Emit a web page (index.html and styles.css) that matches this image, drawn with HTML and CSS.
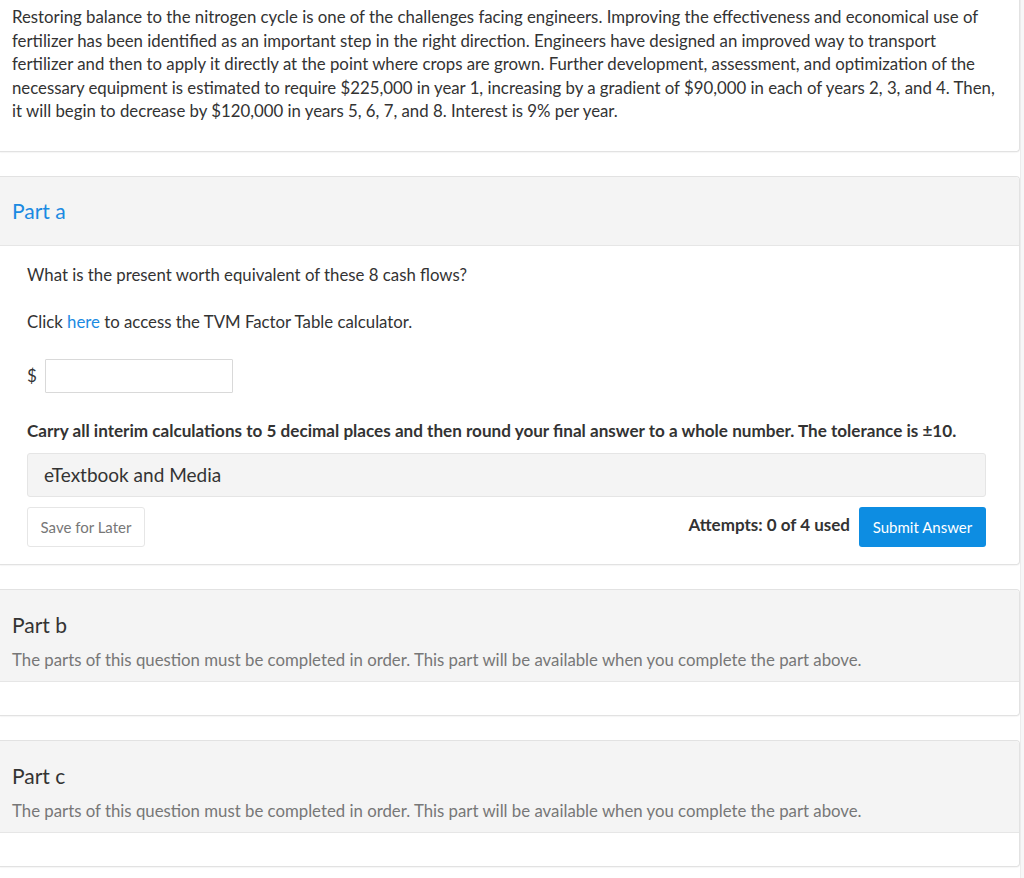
FILE: index.html
```html
<!DOCTYPE html>
<html>
<head>
<meta charset="utf-8">
<link rel="stylesheet" href="styles.css">
</head>
<body>
<div class="page">
  <main class="main">
    <section class="card intro">
      <p>Restoring balance to the nitrogen cycle is one of the challenges facing engineers. Improving the effectiveness and economical use of fertilizer has been identified as an important step in the right direction. Engineers have designed an improved way to transport fertilizer and then to apply it directly at the point where crops are grown. Further development, assessment, and optimization of the necessary equipment is estimated to require $225,000 in year 1, increasing by a gradient of $90,000 in each of years 2, 3, and 4. Then, it will begin to decrease by $120,000 in years 5, 6, 7, and 8. Interest is 9% per year.</p>
    </section>

    <section class="card part">
      <header class="part-head">
        <h2 class="part-title active">Part a</h2>
      </header>
      <div class="part-body">
        <p class="q">What is the present worth equivalent of these 8 cash flows?</p>
        <p class="q">Click <a class="link" href="#">here</a> to access the TVM Factor Table calculator.</p>
        <div class="answer-row">
          <span class="cur">$</span>
          <input class="answer" type="text">
        </div>
        <p class="note">Carry all interim calculations to 5 decimal places and then round your final answer to a whole number. The tolerance is ±10.</p>
        <div class="media">eTextbook and Media</div>
        <div class="actions">
          <button class="btn-save">Save for Later</button>
          <div class="submit-group">
            <span class="attempts">Attempts: 0 of 4 used</span>
            <button class="btn-submit">Submit Answer</button>
          </div>
        </div>
      </div>
    </section>

    <section class="card part locked">
      <header class="part-head">
        <h2 class="part-title">Part b</h2>
        <p class="locked-msg">The parts of this question must be completed in order. This part will be available when you complete the part above.</p>
      </header>
      <div class="part-foot"></div>
    </section>

    <section class="card part locked">
      <header class="part-head">
        <h2 class="part-title">Part c</h2>
        <p class="locked-msg">The parts of this question must be completed in order. This part will be available when you complete the part above.</p>
      </header>
      <div class="part-foot"></div>
    </section>
  </main>
  <div class="track"></div>
</div>
</body>
</html>
```

FILE: styles.css
```css
* { box-sizing: border-box; }
html, body { margin: 0; padding: 0; }
body {
  font-family: Lato, "Open Sans", "Liberation Sans", sans-serif;
  color: #333;
  background: #fff;
}
.page {
  display: flex;
  min-height: 878px;
}
.main {
  flex: 1;
  display: flex;
  flex-direction: column;
  gap: 24px;
  padding-bottom: 20px;
}
.track {
  width: 4px;
  border-left: 1px solid #ececec;
  background: #f7f7f7;
}
.card {
  background: #fff;
  border: 1px solid #e2e2e2;
  border-left: none;
  border-radius: 0 4px 4px 0;
  box-shadow: 0 1px 1px rgba(0,0,0,0.04);
  overflow: hidden;
}
.intro {
  border-top: none;
  border-radius: 0 0 4px 0;
  padding: 5px 21px 28px 12px;
}
.intro p {
  margin: 0;
  font-size: 16.8px;
  line-height: 23.5px;
}
.part-head {
  background: #f4f4f4;
  border-bottom: 1px solid #e6e6e6;
  padding: 22px 12px 22px;
}
.locked .part-head {
  padding: 23px 12px 10px;
}
.part-title {
  margin: 0;
  font-size: 21px;
  line-height: 24px;
  font-weight: 400;
  color: #333;
}
.part-title.active { color: #1a8ae2; }
.locked-msg {
  margin: 11px 0 0;
  font-size: 16.8px;
  line-height: 23px;
  color: #777;
}
.part-foot { height: 33px; }
.part-body {
  padding: 17px 33px 17px 27px;
}
.q {
  margin: 0 0 24px;
  font-size: 16.8px;
  line-height: 23px;
}
.q + .q { margin-bottom: 26px; }
.link { color: #1a8ae2; text-decoration: none; }
.answer-row {
  display: flex;
  align-items: center;
  gap: 9px;
}
.cur { font-size: 17px; width: 9px; }
.answer {
  width: 188px;
  height: 34px;
  border: 1px solid #d9d9d9;
  border-radius: 1px;
  background: #fff;
  font: inherit;
}
.note {
  margin: 26px 0 11px;
  font-size: 17.1px;
  line-height: 23px;
  font-weight: 700;
}
.media {
  height: 44px;
  display: flex;
  align-items: center;
  padding-left: 16px;
  background: #f4f4f4;
  border: 1px solid #e5e5e5;
  border-radius: 3px;
  font-size: 19px;
  color: #333;
}
.actions {
  margin-top: 10px;
  display: flex;
  justify-content: space-between;
  align-items: center;
}
.btn-save {
  height: 40px;
  width: 118px;
  background: #fff;
  border: 1px solid #e6e6e6;
  border-radius: 3px;
  font-family: inherit;
  font-size: 15px;
  color: #777;
}
.submit-group {
  display: flex;
  align-items: center;
  gap: 9px;
}
.attempts {
  font-size: 17px;
  font-weight: 700;
  color: #333;
  margin-top: -4px;
}
.btn-submit {
  height: 40px;
  width: 127px;
  background: #0d8de2;
  border: none;
  border-radius: 3px;
  font-family: inherit;
  font-size: 15px;
  color: #fff;
}
```
